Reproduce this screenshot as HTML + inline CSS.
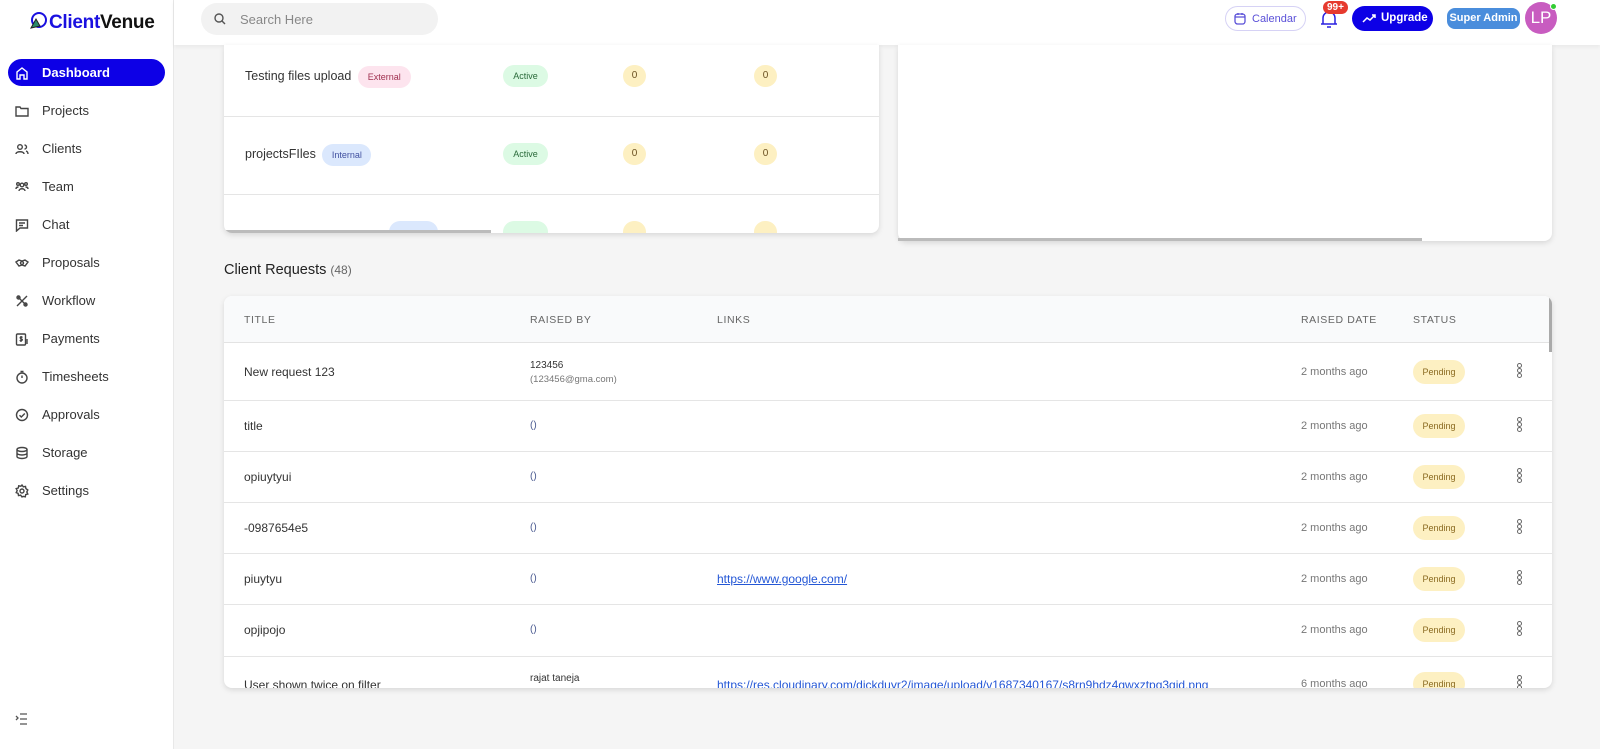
<!DOCTYPE html>
<html><head><meta charset="utf-8"><style>
*{box-sizing:border-box;margin:0;padding:0}
body{width:1600px;height:749px;overflow:hidden;background:#f5f5f5;font-family:"Liberation Sans",sans-serif;color:#333;position:relative}
.side{position:absolute;left:0;top:0;width:174px;height:749px;background:#fff;border-right:1px solid #e8e8e8}
.logo{position:absolute;left:28px;top:11px;font-size:19px;font-weight:bold;letter-spacing:-0.3px}
.logo .c{color:#1a10e0}.logo .v{color:#111}
.nav{position:absolute;left:8px;width:157px;height:27px;border-radius:14px;font-size:13px;color:#333;display:flex;align-items:center;padding-left:7px}
.nav svg{width:14px;height:14px;margin-right:13px;stroke:#444;fill:none;stroke-width:1.4}
.nav.act{background:#0d00e6;color:#fff;font-weight:bold}
.nav.act svg{stroke:#fff}
.hdr{position:absolute;left:174px;top:0;width:1426px;height:45px;background:#fff;box-shadow:0 2px 4px rgba(0,0,0,.05)}
.search{position:absolute;left:201px;top:3px;width:237px;height:32px;border-radius:16px;background:#f2f2f2;font-size:13px;color:#888;padding:9px 0 0 39px}
.card{position:absolute;background:#fff;border-radius:8px;box-shadow:0 2px 6px rgba(0,0,0,.12)}
.pill{display:inline-block;border-radius:12px;font-size:9px;text-align:center;line-height:22px;height:22px;vertical-align:middle}
.row{position:absolute;left:0;width:100%;border-bottom:1px solid #e5e5e5}
.t{position:absolute;font-size:12px;color:#333}
.th{position:absolute;font-size:10.5px;color:#666;letter-spacing:.6px;top:18px}
.pend{position:absolute;left:1189px;width:52px;height:24px;border-radius:12px;background:#fdf0c2;color:#8a6a20;font-size:9px;text-align:center;line-height:24px}
.dots{position:absolute;left:1293px;width:5px}
.dots i{display:block;width:5px;height:5px;border:1.2px solid #666;border-radius:50%;margin-bottom:0}
.dt{position:absolute;left:1077px;font-size:11px;color:#777}
.lnk{position:absolute;left:493px;font-size:12px;color:#2457d6;text-decoration:underline}
.rb{position:absolute;left:306px;font-size:10px;color:#4a5a90}
</style></head><body>
<div class="side">
 <div class="logo"><svg width="20" height="20" viewBox="0 0 20 20" style="vertical-align:-3px;margin-right:1px"><circle cx="11" cy="9" r="7" fill="none" stroke="#1a10e0" stroke-width="2"/><path d="M3 17 L8 8 L12 15 Z" fill="#2a8a6a" stroke="#222" stroke-width="1"/></svg><span class="c">Client</span><span class="v">Venue</span></div>
 <div class="nav act" style="top:59px"><svg viewBox="0 0 14 14"><path d="M2 13V6l5-4 5 4v7H9V9H5v4z"/></svg>Dashboard</div>
 <div class="nav" style="top:97px"><svg viewBox="0 0 14 14"><path d="M1 3h4l1 1.5h7V12H1z"/></svg>Projects</div>
 <div class="nav" style="top:135px"><svg viewBox="0 0 14 14"><circle cx="5" cy="5" r="2.3"/><path d="M1 12c0-3 8-3 8 0M9.5 3a2 2 0 010 4M11 9c1.5.5 2 1.5 2 3"/></svg>Clients</div>
 <div class="nav" style="top:173px"><svg viewBox="0 0 14 14"><circle cx="7" cy="5" r="1.8"/><circle cx="3" cy="4" r="1.3"/><circle cx="11" cy="4" r="1.3"/><path d="M4 11c0-3 6-3 6 0M1 9c0-2 2-2 2.5-2M13 9c0-2-2-2-2.5-2"/></svg>Team</div>
 <div class="nav" style="top:211px"><svg viewBox="0 0 14 14"><path d="M1.5 2h11v8H5l-3.5 3z M4 5h6M4 7.5h4"/></svg>Chat</div>
 <div class="nav" style="top:249px"><svg viewBox="0 0 14 14"><path d="M1 6l3-2 3 1 3-1 3 2-3 4-3-1-3 1z"/><circle cx="7" cy="7" r="1.5"/></svg>Proposals</div>
 <div class="nav" style="top:287px"><svg viewBox="0 0 14 14"><path d="M2 2l10 10M12 2L2 12"/><circle cx="3.5" cy="3.5" r="1.5"/><circle cx="10.5" cy="10.5" r="1.5"/></svg>Workflow</div>
 <div class="nav" style="top:325px"><svg viewBox="0 0 14 14"><rect x="1.5" y="2" width="9" height="11" rx="1"/><path d="M7.5 5.5c-1-1-3-.5-2 .8s2.5.5 1.5 2c-.6.7-2 .5-2.3 0M6 4v6M12 7v5"/></svg>Payments</div>
 <div class="nav" style="top:363px"><svg viewBox="0 0 14 14"><circle cx="7" cy="8" r="5"/><path d="M7 8V5.5M5.5 1.5h3"/></svg>Timesheets</div>
 <div class="nav" style="top:401px"><svg viewBox="0 0 14 14"><circle cx="7" cy="7" r="5.5"/><path d="M4.5 7.2l1.8 1.8 3.5-3.5"/></svg>Approvals</div>
 <div class="nav" style="top:439px"><svg viewBox="0 0 14 14"><ellipse cx="7" cy="3.5" rx="5" ry="2"/><path d="M2 3.5v7c0 1 2 2 5 2s5-1 5-2v-7M2 7c0 1 2 2 5 2s5-1 5-2"/></svg>Storage</div>
 <div class="nav" style="top:477px"><svg viewBox="0 0 14 14"><circle cx="7" cy="7" r="2"/><path d="M7 1l1.3 1.8 2.2-.4.4 2.2L12.8 6l-1 2 1 2-2.1.6-.4 2.2-2.2-.4L7 13l-1.3-1.8-2.2.4-.4-2.2L1.2 8.6l1-2-1-2 2.1-.6.4-2.2 2.2.4z"/></svg>Settings</div>
 <svg style="position:absolute;left:15px;top:713px" width="13" height="12" viewBox="0 0 13 12" fill="none" stroke="#555" stroke-width="1.3"><path d="M5 1h7M5 6h7M5 11h7M1 3l2 2-2 2"/></svg>
</div>
<div class="hdr"></div>
<div class="search"><svg style="position:absolute;left:13px;top:10px" width="12" height="12" viewBox="0 0 12 12" fill="none" stroke="#555" stroke-width="1.4"><circle cx="5" cy="5" r="4"/><path d="M8 8l3 3"/></svg>Search Here</div>
<div style="position:absolute;left:1225px;top:6px;width:81px;height:25px;border:1px solid #d6d2f5;border-radius:13px;font-size:11px;color:#5a50d8;padding:6px 0 0 26px"><svg style="position:absolute;left:8px;top:5px" width="12" height="13" viewBox="0 0 12 13" fill="none" stroke="#5a50d8" stroke-width="1.3"><rect x="1" y="2" width="10" height="10" rx="2.5"/><path d="M1 5h10M4 1v2M8 1v2"/></svg>Calendar</div>
<svg style="position:absolute;left:1320px;top:9px" width="18" height="20" viewBox="0 0 18 20" fill="none" stroke="#2a20e0" stroke-width="1.5"><path d="M3 15V9a6 6 0 0112 0v6zM1 15h16M7 18h4"/></svg>
<div style="position:absolute;left:1323px;top:1px;background:#e63a2e;color:#fff;font-size:10px;font-weight:bold;border-radius:8px;padding:1px 4px">99+</div>
<div style="position:absolute;left:1352px;top:6px;width:81px;height:25px;border-radius:13px;background:#0d00e6;color:#fff;font-size:11.5px;font-weight:bold;padding:6px 0 0 29px"><svg style="position:absolute;left:10px;top:8px" width="14" height="9" viewBox="0 0 14 9" fill="none" stroke="#fff" stroke-width="1.5"><path d="M1 8l4-4 3 2 5-5M10 1h3v3"/></svg>Upgrade</div>
<div style="position:absolute;left:1447px;top:8px;width:73px;height:21px;border-radius:8px;background:#4a8ddc;color:#fff;font-size:11px;font-weight:bold;text-align:center;line-height:21px">Super Admin</div>
<div style="position:absolute;left:1525px;top:2px;width:32px;height:32px;border-radius:50%;background:#c85cc0;color:#fff;font-size:17px;text-align:center;line-height:32px">LP</div>
<div style="position:absolute;left:1550px;top:3px;width:7px;height:7px;border-radius:50%;background:#3c3;border:1px solid #fff"></div>

<div class="card" style="left:224px;top:45px;width:655px;height:188px;border-radius:0 0 8px 8px;overflow:hidden">
 <div class="row" style="top:0;height:72px"></div>
 <div class="row" style="top:72px;height:78px"></div>
 <div class="t" style="left:21px;top:20px;font-size:12.5px;line-height:22px">Testing files upload <span class="pill" style="background:#fde4ee;color:#a03050;width:53px;margin-left:3px">External</span></div>
 <div class="t" style="left:21px;top:98px;font-size:12.5px;line-height:22px">projectsFIles <span class="pill" style="background:#dbe8fd;color:#4050a0;width:49px;margin-left:3px">Internal</span></div>
 <span class="pill" style="position:absolute;left:279px;top:20px;width:45px;background:#dcfae4;color:#2a6a3a">Active</span>
 <span class="pill" style="position:absolute;left:279px;top:98px;width:45px;background:#dcfae4;color:#2a6a3a">Active</span>
 <span class="pill" style="position:absolute;left:399px;top:20px;width:23px;background:#fdf0c2;color:#6a5020;font-size:10px">0</span>
 <span class="pill" style="position:absolute;left:530px;top:20px;width:23px;background:#fdf0c2;color:#6a5020;font-size:10px">0</span>
 <span class="pill" style="position:absolute;left:399px;top:98px;width:23px;background:#fdf0c2;color:#6a5020;font-size:10px">0</span>
 <span class="pill" style="position:absolute;left:530px;top:98px;width:23px;background:#fdf0c2;color:#6a5020;font-size:10px">0</span>
 <span class="pill" style="position:absolute;left:165px;top:176px;width:49px;background:#dbe8fd"></span>
 <span class="pill" style="position:absolute;left:279px;top:176px;width:45px;background:#dcfae4"></span>
 <span class="pill" style="position:absolute;left:399px;top:176px;width:23px;background:#fdf0c2"></span>
 <span class="pill" style="position:absolute;left:530px;top:176px;width:23px;background:#fdf0c2"></span>
 <div style="position:absolute;left:0;top:185px;width:267px;height:3px;background:#bbb"></div>
</div>
<div class="card" style="left:898px;top:45px;width:654px;height:196px;border-radius:0 0 8px 8px">
 <div style="position:absolute;left:0;top:193px;width:524px;height:3px;background:#bbb"></div>
</div>

<div style="position:absolute;left:224px;top:262px;font-size:14.5px;color:#222">Client Requests <span style="font-size:12px;color:#666">(48)</span></div>

<div class="card" style="left:224px;top:296px;width:1328px;height:392px;overflow:hidden">
 <div style="position:absolute;left:0;top:0;width:100%;height:47px;background:#f9fafb;border-bottom:1px solid #e3e3e3"></div>
 <div class="th" style="left:20px">TITLE</div><div class="th" style="left:306px">RAISED BY</div><div class="th" style="left:493px">LINKS</div><div class="th" style="left:1077px">RAISED DATE</div><div class="th" style="left:1189px">STATUS</div>
 <div style="position:absolute;left:1325px;top:2px;width:3px;height:54px;background:#aaa"></div>

 <div class="row" style="top:47px;height:58px"></div>
 <div class="t" style="left:20px;top:69px">New request 123</div>
 <div class="rb" style="top:64px;color:#333">123456</div><div class="rb" style="top:78px;color:#777;font-size:9.5px">(123456@gma.com)</div>
 <div class="dt" style="top:70px">2 months ago</div><div class="pend" style="top:64px">Pending</div>
 <div class="dots" style="top:67px"><i></i><i></i><i></i></div>

 <div class="row" style="top:105px;height:51px"></div>
 <div class="t" style="left:20px;top:123px">title</div><div class="rb" style="top:124px">()</div>
 <div class="dt" style="top:124px">2 months ago</div><div class="pend" style="top:118px">Pending</div><div class="dots" style="top:121px"><i></i><i></i><i></i></div>

 <div class="row" style="top:156px;height:51px"></div>
 <div class="t" style="left:20px;top:174px">opiuytyui</div><div class="rb" style="top:175px">()</div>
 <div class="dt" style="top:175px">2 months ago</div><div class="pend" style="top:169px">Pending</div><div class="dots" style="top:172px"><i></i><i></i><i></i></div>

 <div class="row" style="top:207px;height:51px"></div>
 <div class="t" style="left:20px;top:225px">-0987654e5</div><div class="rb" style="top:226px">()</div>
 <div class="dt" style="top:226px">2 months ago</div><div class="pend" style="top:220px">Pending</div><div class="dots" style="top:223px"><i></i><i></i><i></i></div>

 <div class="row" style="top:258px;height:51px"></div>
 <div class="t" style="left:20px;top:276px">piuytyu</div><div class="rb" style="top:277px">()</div>
 <div class="lnk" style="top:276px">https://www.google.com/</div>
 <div class="dt" style="top:277px">2 months ago</div><div class="pend" style="top:271px">Pending</div><div class="dots" style="top:274px"><i></i><i></i><i></i></div>

 <div class="row" style="top:309px;height:52px"></div>
 <div class="t" style="left:20px;top:327px">opjipojo</div><div class="rb" style="top:328px">()</div>
 <div class="dt" style="top:328px">2 months ago</div><div class="pend" style="top:322px">Pending</div><div class="dots" style="top:325px"><i></i><i></i><i></i></div>

 <div class="t" style="left:20px;top:382px">User shown twice on filter</div>
 <div class="rb" style="top:377px;color:#333">rajat taneja</div>
 <div class="lnk" style="top:382px">https://res.cloudinary.com/dickduyr2/image/upload/v1687340167/s8rn9hdz4gwxztpg3gid.png</div>
 <div class="dt" style="top:382px">6 months ago</div><div class="pend" style="top:376px">Pending</div><div class="dots" style="top:379px"><i></i><i></i><i></i></div>
</div>
</body></html>
